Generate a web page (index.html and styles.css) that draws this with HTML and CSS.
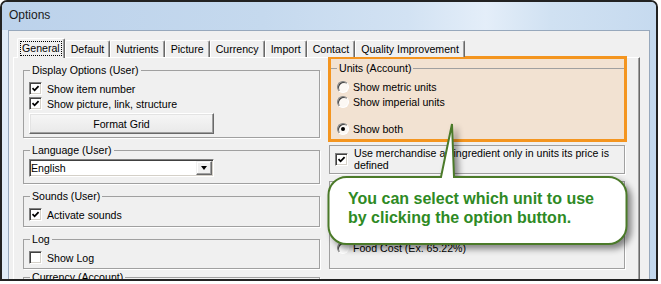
FILE: index.html
```html
<!DOCTYPE html>
<html>
<head>
<meta charset="utf-8">
<title>Options</title>
<link rel="stylesheet" href="styles.css">
</head>
<body>
<div class="window">
  <div class="titlebar">Options</div>
  <div class="frame">
    <div class="client">
      <div class="tabs">
        <div class="tab active"><span class="focus">General</span></div>
        <div class="tab">Default</div>
        <div class="tab">Nutrients</div>
        <div class="tab">Picture</div>
        <div class="tab">Currency</div>
        <div class="tab">Import</div>
        <div class="tab">Contact</div>
        <div class="tab">Quality Improvement</div>
      </div>
      <div class="panel">
        <div class="col">
          <fieldset class="group">
            <legend>Display Options (User)</legend>
            <div class="row first"><span class="cb"><svg viewBox="0 0 9 9" width="9" height="9"><path d="M1.5 4.2 L3.6 6.3 L7.6 2.2" fill="none" stroke="#000" stroke-width="1.8"/></svg></span>Show item number</div>
            <div class="row"><span class="cb"><svg viewBox="0 0 9 9" width="9" height="9"><path d="M1.5 4.2 L3.6 6.3 L7.6 2.2" fill="none" stroke="#000" stroke-width="1.8"/></svg></span>Show picture, link, structure</div>
            <div class="button">Format Grid</div>
          </fieldset>
          <fieldset class="group group-lang">
            <legend>Language (User)</legend>
            <div class="select"><span class="select-value">English</span><span class="select-btn"><span class="arrow"></span></span></div>
          </fieldset>
          <fieldset class="group">
            <legend>Sounds (User)</legend>
            <div class="row first"><span class="cb"><svg viewBox="0 0 9 9" width="9" height="9"><path d="M1.5 4.2 L3.6 6.3 L7.6 2.2" fill="none" stroke="#000" stroke-width="1.8"/></svg></span>Activate sounds</div>
          </fieldset>
          <fieldset class="group group-log">
            <legend>Log</legend>
            <div class="row first"><span class="cb"></span>Show Log</div>
          </fieldset>
          <fieldset class="group group-currency">
            <legend>Currency (Account)</legend>
          </fieldset>
        </div>
        <div class="col">
          <div class="highlight">
            <fieldset class="group group-units">
              <legend>Units (Account)</legend>
              <div class="row first"><span class="rb"></span>Show metric units</div>
              <div class="row"><span class="rb"></span>Show imperial units</div>
              <div class="row spaced"><span class="rb on"></span>Show both</div>
            </fieldset>
          </div>
          <fieldset class="group group-merch">
            <div class="row multi"><span class="cb"><svg viewBox="0 0 9 9" width="9" height="9"><path d="M1.5 4.2 L3.6 6.3 L7.6 2.2" fill="none" stroke="#000" stroke-width="1.8"/></svg></span><span class="multi-text">Use merchandise as ingredient only in units its price is<br>defined</span></div>
          </fieldset>
          <fieldset class="group group-cost">
            <div class="row"><span class="rb"></span>Food Cost (Ex. 65.22%)</div>
          </fieldset>
        </div>
      </div>
    </div>
  </div>
</div>
<div class="callout">
  <svg class="callout-shape" width="318" height="134" viewBox="0 0 318 134">
    <path d="M24.5,58 H119 L130,5 L132,58 H286.5 A18,18 0 0 1 304.5,76 V107 A18,18 0 0 1 286.5,125 H24.5 A18,18 0 0 1 6.5,107 V76 A18,18 0 0 1 24.5,58 Z" fill="#fff" stroke="#4b7a29" stroke-width="2"/>
  </svg>
  <p class="callout-text">You can select which unit to use<br>by clicking the option button.</p>
</div>
</body>
</html>
```
FILE: styles.css
```css
html, body {
  margin: 0;
  padding: 0;
}
body {
  width: 661px;
  height: 284px;
  overflow: hidden;
  background: #fff;
  position: relative;
  font-family: "Liberation Sans", Arial, sans-serif;
  color: #000;
}
.window {
  width: 658px;
  height: 281px;
  box-sizing: border-box;
  border: 2px solid #222;
  border-radius: 7px 7px 0 0;
  display: flex;
  flex-direction: column;
  overflow: hidden;
  background: linear-gradient(90deg, #e0ebf7 0%, #d3e3f3 55%, #c3d8ee 100%);
}
.titlebar {
  height: 28px;
  flex: none;
  padding-left: 7px;
  line-height: 26px;
  font-size: 12px;
  color: #1a1a1a;
  background: linear-gradient(90deg, #bcd2eb 0%, #c5d9ee 40%, #d2e2f3 62%, #e4eef9 74%, #d0e1f2 84%, #c6daef 100%);
}
.frame {
  flex: 1;
  display: flex;
  padding: 0 6px;
  min-height: 0;
}
.client {
  flex: 1;
  display: flex;
  flex-direction: column;
  background: #f0f0f0;
  border: 1px solid #97a8bc;
  border-bottom: none;
  padding: 7px 9px 0 4px;
  overflow: hidden;
  min-height: 0;
}
.tabs {
  display: flex;
  align-items: flex-end;
  height: 19px;
  flex: none;
  padding-left: 4px;
  position: relative;
  z-index: 2;
}
.tab {
  height: 17px;
  box-sizing: border-box;
  padding: 0 5px;
  border: 1px solid #fff;
  border-bottom: none;
  border-right-color: #696969;
  box-shadow: inset -1px 0 0 #a0a0a0;
  border-radius: 2px 2px 0 0;
  display: flex;
  align-items: center;
  font-size: 10.6px;
  background: #f0f0f0;
  white-space: nowrap;
}
.tab.active {
  height: 20px;
  margin-bottom: -1px;
  padding: 0 3px;
}
.focus {
  outline: 1px dotted #000;
  outline-offset: 0;
  padding: 0 1px;
  line-height: 13px;
}
.panel {
  flex: none;
  height: 260px;
  box-sizing: border-box;
  display: grid;
  grid-template-columns: 297px 296px;
  column-gap: 9px;
  align-items: start;
  padding-left: 9px;
  border: 1px solid;
  border-color: #fff #696969 #696969 #fff;
  box-shadow: inset -1px 0 0 #a0a0a0;
  background: #f0f0f0;
}
.col {
  display: flex;
  flex-direction: column;
  min-width: 0;
}
.col:first-child {
  padding-top: 6px;
}
.group {
  margin: 0;
  padding: 2px 6px 4px 5px;
  border: 1px solid #a0a0a0;
  box-shadow: 1px 1px 0 #fff;
  min-width: 0;
  font-size: 10.6px;
}
.group + .group {
  margin-top: 6px;
}
.group legend {
  padding: 0 2px;
  margin-left: 1px;
  line-height: 13px;
  font-size: 10.6px;
}
.group:first-child {
  padding-bottom: 3px;
}
.group-lang {
  padding-bottom: 6px;
}
.group-log {
  padding-bottom: 3px;
}
.group.group-currency {
  margin-top: 2px;
  padding-bottom: 30px;
}
.row {
  display: flex;
  align-items: center;
  height: 15px;
  white-space: nowrap;
}
.row.first {
  margin-top: 2px;
}
.cb {
  width: 13px;
  height: 13px;
  box-sizing: border-box;
  flex: none;
  border: 1px solid;
  border-color: #808080 #fff #fff #808080;
  box-shadow: inset 1px 1px 0 #404040, inset -1px -1px 0 #d4d0c8;
  background: #fff;
  margin-right: 5px;
  display: flex;
  align-items: center;
  justify-content: center;
}
.cb svg {
  display: block;
}
.rb {
  width: 12px;
  height: 12px;
  box-sizing: border-box;
  flex: none;
  border-radius: 50%;
  border: 1px solid;
  border-color: #808080 #fff #fff #808080;
  box-shadow: inset 1px 1px 0 #404040;
  background: rgba(255, 255, 255, 0.75);
  margin-right: 4px;
  display: flex;
  align-items: center;
  justify-content: center;
}
.rb.on::after {
  content: "";
  width: 4px;
  height: 4px;
  border-radius: 50%;
  background: #000;
}
.button {
  width: 185px;
  height: 21px;
  box-sizing: border-box;
  margin-top: 2px;
  border: 1px solid;
  border-color: #fff #696969 #696969 #fff;
  box-shadow: inset -1px -1px 0 #a0a0a0, inset 1px 1px 0 #e3e3e3;
  background: linear-gradient(#f6f6f6, #e9e9e9);
  display: flex;
  align-items: center;
  justify-content: center;
  font-size: 10.6px;
}
.select {
  width: 185px;
  height: 18px;
  box-sizing: border-box;
  border: 1px solid;
  border-color: #808080 #fff #fff #808080;
  box-shadow: inset 1px 1px 0 #404040, inset -1px -1px 0 #d4d0c8;
  background: #fff;
  display: flex;
  align-items: center;
  padding-left: 1px;
}
.select-value {
  flex: 1;
  font-size: 10.6px;
}
.select-btn {
  width: 16px;
  height: 14px;
  box-sizing: border-box;
  margin-right: 1px;
  border: 1px solid;
  border-color: #f0f0f0 #696969 #696969 #f0f0f0;
  box-shadow: inset -1px -1px 0 #a0a0a0, inset 1px 1px 0 #fff;
  background: #f0f0f0;
  display: flex;
  align-items: center;
  justify-content: center;
}
.arrow {
  width: 0;
  height: 0;
  border-left: 3.5px solid transparent;
  border-right: 3.5px solid transparent;
  border-top: 4px solid #000;
}
.highlight {
  margin: -2px -2px 0 -1px;
  border: 3px solid #f4951f;
  background: #f2e2d2;
}
.group.group-units {
  margin-top: 2.5px;
  border-width: 1px 0 0 0;
  box-shadow: none;
  padding: 2px 6px 2.5px 6px;
}
.group-units legend {
  margin-left: 0;
}
.group-units .row.first {
  margin-top: 3px;
}
.row.spaced {
  margin-top: 12px;
}
.group.group-merch {
  margin-top: 3px;
  padding: 1px 6px 2px 5px;
}
.row.multi {
  height: auto;
}
.multi-text {
  line-height: 12px;
  margin-left: 1px;
}
.group.group-cost {
  margin-top: 7px;
  padding: 58px 6px 13px 7px;
}
.callout {
  position: absolute;
  left: 322px;
  top: 119px;
  width: 318px;
  height: 134px;
}
.callout-shape {
  position: absolute;
  left: 0;
  top: 0;
  filter: drop-shadow(4px 4px 3px rgba(0, 0, 0, 0.45));
}
.callout-text {
  position: relative;
  margin: 0;
  padding: 70px 0 0 26px;
  font-weight: bold;
  font-size: 16px;
  line-height: 19px;
  color: #2e8a24;
  white-space: nowrap;
}
```
